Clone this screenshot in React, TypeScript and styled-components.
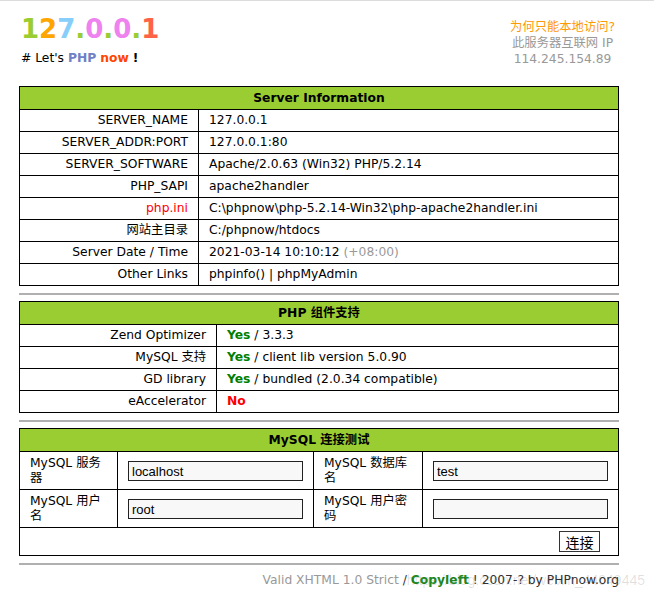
import React from "react";
import styled, { createGlobalStyle } from "styled-components";

const GlobalStyle = createGlobalStyle`
  html, body {
    margin: 0;
    padding: 0;
    background: #fff;
  }
  body {
    border-top: 1px solid #dcdcdc;
    font-family: "DejaVu Sans", Verdana, "Noto Sans CJK SC", sans-serif;
    font-size: 12.3px;
    color: #000;
  }
`;

const Page = styled.div`
  position: relative;
  width: 600px;
  margin-left: 19px;
  padding-top: 13px;
`;

const Header = styled.div`
  display: flex;
  justify-content: space-between;
  align-items: flex-start;
`;

const Brand = styled.div`
  padding-left: 2px;
`;

const Logo = styled.div`
  font-family: "DejaVu Sans", Verdana, sans-serif;
  font-weight: bold;
  font-size: 26px;
  line-height: 30px;
`;

const Ch = styled.span<{ $c: string }>`
  color: ${(p) => p.$c};
`;

const Slogan = styled.div`
  margin-top: 7px;
  line-height: 15px;
  color: #000;
`;

const Strong = styled.b<{ $c?: string }>`
  font-weight: bold;
  color: ${(p) => p.$c || "inherit"};
`;

const IpInfo = styled.div`
  padding-top: 5px;
  padding-right: 4px;
  text-align: center;
  line-height: 16px;
  color: #999;
`;

const WhyLink = styled.div`
  color: #ff9900;
`;

const InfoTable = styled.table<{ $mt: number }>`
  width: 600px;
  margin-top: ${(p) => p.$mt}px;
  border-collapse: collapse;
  border: 1px solid #000;
  font-size: 12.3px;
  line-height: 15px;
`;

const HeadCell = styled.th`
  background: #9acd32;
  border: 1px solid #000;
  padding: 4px 0 3px;
  text-align: center;
  font-weight: bold;
  color: #000;
`;

const LabelCell = styled.td<{ $w: number; $red?: boolean }>`
  width: ${(p) => p.$w}px;
  border: 1px solid #000;
  padding: 3px 10px 3px 0;
  text-align: right;
  color: ${(p) => (p.$red ? "#ff0000" : "#000")};
  white-space: nowrap;
`;

const ValueCell = styled.td`
  border: 1px solid #000;
  padding: 3px 10px;
  text-align: left;
  white-space: nowrap;
`;

const Muted = styled.span`
  color: #999;
`;

const Yes = styled.b`
  color: #008000;
`;

const No = styled.b`
  color: #ff0000;
`;

const Divider = styled.hr`
  width: 600px;
  margin: 7px 0 0;
  border: 0;
  border-top: 2px solid #b0b0b0;
  height: 0;
`;

const FormLabel = styled.td<{ $w: number }>`
  width: ${(p) => p.$w}px;
  border: 1px solid #000;
  padding: 4px 10px 3px 10px;
  text-align: left;
  vertical-align: middle;
  line-height: 15px;
`;

const FormField = styled.td`
  border: 1px solid #000;
  padding: 4px 10px 3px;
  vertical-align: middle;
`;

const Input = styled.input`
  box-sizing: border-box;
  width: 175px;
  height: 20px;
  padding: 0 3px;
  border: 1px solid #222;
  background: #f8f8f8;
  font-family: "Liberation Sans", Arial, sans-serif;
  font-size: 13px;
  color: #000;
  outline: none;
`;

const ActionCell = styled.td`
  border: 1px solid #000;
  padding: 3px 18px 3px 0;
  text-align: right;
  height: 21px;
`;

const Button = styled.button`
  box-sizing: border-box;
  width: 41px;
  height: 21px;
  padding: 0;
  border: 1px solid #333;
  background: #fff;
  font-family: "Noto Sans CJK SC", sans-serif;
  font-size: 14px;
  line-height: 18px;
  color: #000;
`;

const Footer = styled.div`
  width: 600px;
  margin-top: 7px;
  text-align: right;
  font-size: 12.3px;
  line-height: 16px;
  color: #999;
`;

const FooterDark = styled.span`
  color: #333;
`;

const Copyleft = styled.b`
  color: #228b22;
`;

const Watermark = styled.div`
  position: absolute;
  right: -26px;
  bottom: 0;
  font-family: "Liberation Sans", Arial, sans-serif;
  font-size: 14px;
  line-height: 16px;
  color: rgba(0, 0, 0, 0.13);
  white-space: nowrap;
  pointer-events: none;
`;

const serverRows: { label: string; value: React.ReactNode; red?: boolean }[] = [
  { label: "SERVER_NAME", value: "127.0.0.1" },
  { label: "SERVER_ADDR:PORT", value: "127.0.0.1:80" },
  { label: "SERVER_SOFTWARE", value: "Apache/2.0.63 (Win32) PHP/5.2.14" },
  { label: "PHP_SAPI", value: "apache2handler" },
  { label: "php.ini", value: "C:\\phpnow\\php-5.2.14-Win32\\php-apache2handler.ini", red: true },
  { label: "网站主目录", value: "C:/phpnow/htdocs" },
  {
    label: "Server Date / Time",
    value: (
      <>
        2021-03-14 10:10:12 <Muted>(+08:00)</Muted>
      </>
    ),
  },
  { label: "Other Links", value: "phpinfo() | phpMyAdmin" },
];

const componentRows: { label: string; value: React.ReactNode }[] = [
  { label: "Zend Optimizer", value: <><Yes>Yes</Yes> / 3.3.3</> },
  { label: "MySQL 支持", value: <><Yes>Yes</Yes> / client lib version 5.0.90</> },
  { label: "GD library", value: <><Yes>Yes</Yes> / bundled (2.0.34 compatible)</> },
  { label: "eAccelerator", value: <No>No</No> },
];

const logoChars: [string, string][] = [
  ["1", "#9acd32"],
  ["2", "#ffa500"],
  ["7", "#87cefa"],
  [".", "#9acd32"],
  ["0", "#ee82ee"],
  [".", "#9acd32"],
  ["0", "#ee82ee"],
  [".", "#9acd32"],
  ["1", "#ff6347"],
];

export default function App() {
  return (
    <>
      <GlobalStyle />
      <Page>
        <Header>
          <Brand>
            <Logo>
              {logoChars.map(([c, col], i) => (
                <Ch key={i} $c={col}>
                  {c}
                </Ch>
              ))}
            </Logo>
            <Slogan>
              # Let's <Strong $c="#6f80c4">PHP</Strong> <Strong $c="#ff4500">now</Strong> <Strong>!</Strong>
            </Slogan>
          </Brand>
          <IpInfo>
            <WhyLink>为何只能本地访问?</WhyLink>
            <div>此服务器互联网 IP</div>
            <div>114.245.154.89</div>
          </IpInfo>
        </Header>

        <InfoTable $mt={19}>
          <thead>
            <tr>
              <HeadCell colSpan={2}>Server Information</HeadCell>
            </tr>
          </thead>
          <tbody>
            {serverRows.map((r) => (
              <tr key={r.label}>
                <LabelCell $w={168} $red={r.red}>
                  {r.label}
                </LabelCell>
                <ValueCell>{r.value}</ValueCell>
              </tr>
            ))}
          </tbody>
        </InfoTable>

        <Divider />

        <InfoTable $mt={6}>
          <thead>
            <tr>
              <HeadCell colSpan={2}>PHP 组件支持</HeadCell>
            </tr>
          </thead>
          <tbody>
            {componentRows.map((r) => (
              <tr key={r.label}>
                <LabelCell $w={186}>{r.label}</LabelCell>
                <ValueCell>{r.value}</ValueCell>
              </tr>
            ))}
          </tbody>
        </InfoTable>

        <Divider />

        <InfoTable $mt={6}>
          <thead>
            <tr>
              <HeadCell colSpan={4}>MySQL 连接测试</HeadCell>
            </tr>
          </thead>
          <tbody>
            <tr>
              <FormLabel $w={77}>MySQL 服务器</FormLabel>
              <FormField>
                <Input defaultValue="localhost" />
              </FormField>
              <FormLabel $w={88}>MySQL 数据库名</FormLabel>
              <FormField>
                <Input defaultValue="test" />
              </FormField>
            </tr>
            <tr>
              <FormLabel $w={77}>MySQL 用户名</FormLabel>
              <FormField>
                <Input defaultValue="root" />
              </FormField>
              <FormLabel $w={88}>MySQL 用户密码</FormLabel>
              <FormField>
                <Input type="password" defaultValue="" />
              </FormField>
            </tr>
            <tr>
              <ActionCell colSpan={4}>
                <Button>连接</Button>
              </ActionCell>
            </tr>
          </tbody>
        </InfoTable>

        <Divider />

        <Footer>
          Valid XHTML 1.0 Strict <FooterDark>/</FooterDark> <Copyleft>Copyleft</Copyleft>{" "}
          <FooterDark>! 2007-? by PHPnow.org</FooterDark>
        </Footer>
        <Watermark>https://blog.csdn.net/weixin_44049445</Watermark>
      </Page>
    </>
  );
}
